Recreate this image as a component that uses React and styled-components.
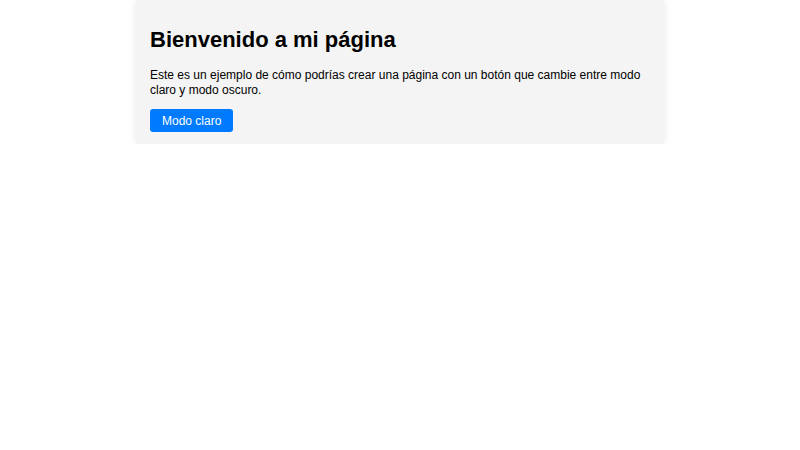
import React from 'react';
import styled, { createGlobalStyle } from 'styled-components';

const Global = createGlobalStyle`
  body { margin: 0; background: #fff; font-family: "Liberation Sans", Arial, sans-serif; }
`;

const Card = styled.div`
  width: 500px;
  margin: 0 auto;
  padding: 14px 14px 12px;
  background: #f4f4f4;
  box-shadow: 0 0 8px rgba(0, 0, 0, 0.1);
`;

const Title = styled.h1`
  margin: 12px 0 14px;
  font-size: 22px;
  line-height: 28px;
  color: #000;
`;

const Text = styled.p`
  margin: 0 0 11px;
  font-size: 12px;
  line-height: 15px;
  color: #000;
`;

const Button = styled.button`
  height: 23px;
  padding: 0 12px;
  border: none;
  border-radius: 3px;
  background: #007bff;
  color: #fff;
  font-family: inherit;
  font-size: 12px;
  cursor: pointer;
`;

export default function App() {
  return (
    <>
      <Global />
      <Card>
        <Title>Bienvenido a mi página</Title>
        <Text>
          Este es un ejemplo de cómo podrías crear una página con un botón que cambie entre modo claro y modo oscuro.
        </Text>
        <Button>Modo claro</Button>
      </Card>
    </>
  );
}
